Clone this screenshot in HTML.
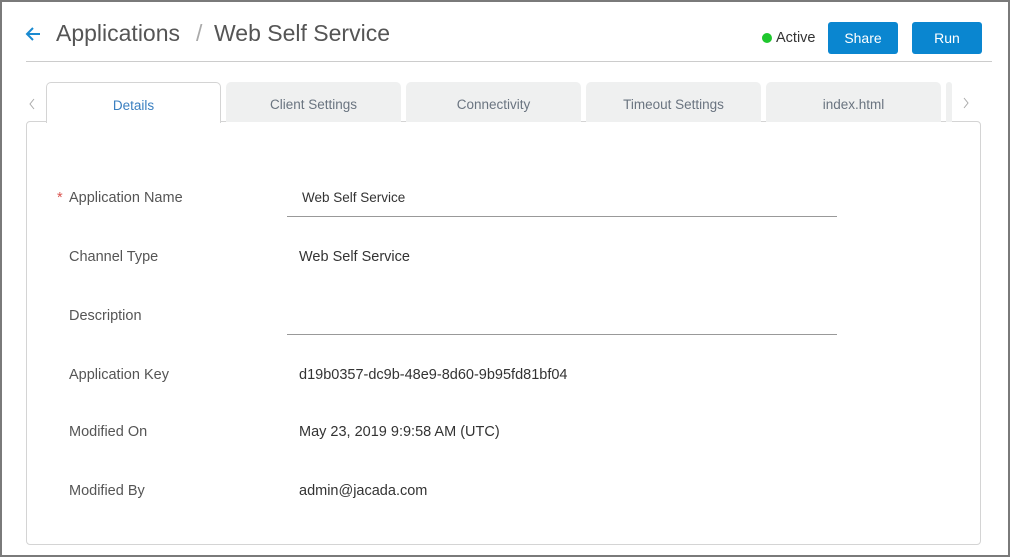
<!DOCTYPE html><html><head><style>
*{margin:0;padding:0;box-sizing:border-box}
body{width:1010px;height:557px;overflow:hidden;background:#fff;font-family:"Liberation Sans",sans-serif;position:relative}
.frame{position:absolute;left:0;top:0;width:1010px;height:557px;border:2px solid #7a7a7a}
.a{position:absolute;white-space:nowrap}
.title{font-size:23px;color:#555;top:20px}
.btn{position:absolute;top:22px;height:32px;background:#0a86d0;color:#fff;border-radius:3px;font-size:14px;text-align:center;line-height:32px}
.tab{position:absolute;top:82px;height:40px;width:175px;background:#eff0f0;border-radius:5px 5px 0 0;font-size:13.5px;color:#6a7480;text-align:center;line-height:46px}
.lbl{position:absolute;left:69px;font-size:14.5px;color:#555}
.val{position:absolute;font-size:14.5px;color:#333}
.line{position:absolute;left:287px;width:550px;height:1px;background:#999}
</style></head><body>
<div class="frame"></div>
<svg class="a" style="left:25px;top:26px" width="17" height="16" viewBox="0 0 17 16"><path d="M15 8H3M8 2L2 8l6 6" stroke="#1a8ad0" stroke-width="2" fill="none"/></svg>
<div class="a title" style="left:56px">Applications</div>
<div class="a title" style="left:196px;color:#aaa">/</div>
<div class="a title" style="left:214px">Web Self Service</div>
<div class="a" style="left:762px;top:33px;width:10px;height:10px;border-radius:50%;background:#1fc72e"></div>
<div class="a" style="left:776px;top:30px;font-size:14.5px;color:#333">Active</div>
<div class="btn" style="left:828px;width:70px">Share</div>
<div class="btn" style="left:912px;width:70px">Run</div>
<div class="a" style="left:26px;top:61px;width:966px;height:1px;background:#ccc"></div>
<div class="a" style="left:26px;top:121px;width:955px;height:424px;border:1px solid #d4d4d4;border-radius:4px"></div>
<svg class="a" style="left:28px;top:98px" width="8" height="12" viewBox="0 0 8 12"><path d="M6 1L2 6l4 5" stroke="#aaa" fill="none"/></svg>
<svg class="a" style="left:962px;top:97px" width="8" height="12" viewBox="0 0 8 12"><path d="M2 1l4 5-4 5" stroke="#aaa" fill="none"/></svg>
<div class="tab" style="left:46px;background:#fff;border:1px solid #d4d4d4;border-bottom:none;height:41px;color:#3a7fc0">Details</div>
<div class="tab" style="left:226px">Client Settings</div>
<div class="tab" style="left:406px">Connectivity</div>
<div class="tab" style="left:586px">Timeout Settings</div>
<div class="tab" style="left:766px">index.html</div>
<div class="tab" style="left:946px;width:6px"></div>
<div class="lbl" style="left:57px;top:190px;color:#d9534f">*</div>
<div class="lbl" style="top:190px">Application Name</div>
<div class="val" style="left:302px;top:190px;font-size:13.5px">Web Self Service</div>
<div class="line" style="top:216px"></div>
<div class="lbl" style="top:249px">Channel Type</div>
<div class="val" style="left:299px;top:249px">Web Self Service</div>
<div class="lbl" style="top:308px">Description</div>
<div class="line" style="top:334px"></div>
<div class="lbl" style="top:367px">Application Key</div>
<div class="val" style="left:299px;top:367px">d19b0357-dc9b-48e9-8d60-9b95fd81bf04</div>
<div class="lbl" style="top:424px">Modified On</div>
<div class="val" style="left:299px;top:424px">May 23, 2019 9:9:58 AM (UTC)</div>
<div class="lbl" style="top:483px">Modified By</div>
<div class="val" style="left:299px;top:483px">admin@jacada.com</div>
</body></html>
